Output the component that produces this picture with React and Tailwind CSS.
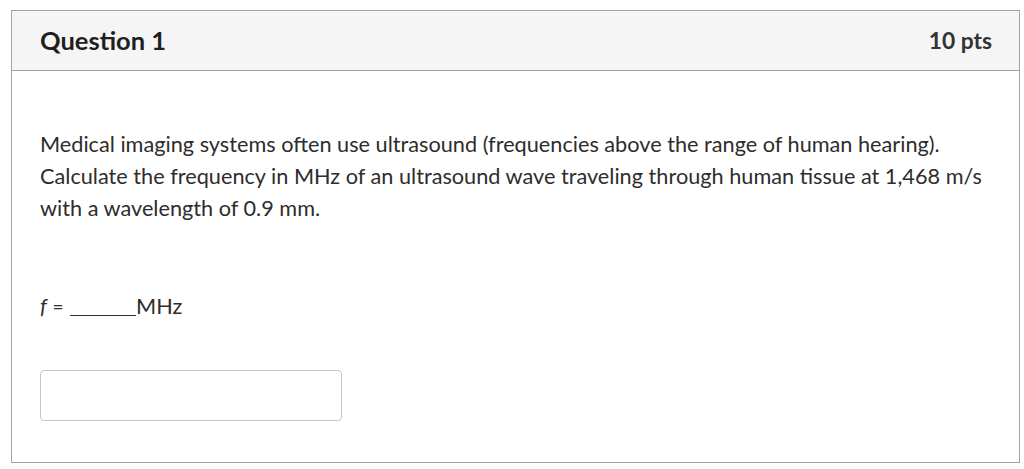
import React from 'react';

const App = () => {
    return (
        <div className="w-[1024px] h-[469px] bg-white font-['Lato','Liberation_Sans',sans-serif] text-[#2d2d2d] pt-[10px] pl-[11px]">
            <div className="w-[1009px] h-[453px] border border-[#a3a3a3] flex flex-col">
                {/* Header */}
                <div className="h-[60px] shrink-0 bg-[#f5f5f5] border-b border-[#a3a3a3] flex items-center justify-between pl-[28px] pr-[27px]">
                    <h2 className="text-[25.5px] font-bold text-[#1f1f1f] leading-none">Question 1</h2>
                    <span className="text-[22.8px] font-bold text-[#333] leading-none">10 pts</span>
                </div>

                {/* Body */}
                <div className="flex-1 pl-[28px] pr-[28px] pt-[57px]">
                    <p className="text-[21.7px] leading-[32px] text-[#2d2d2d]">
                        Medical imaging systems often use ultrasound (frequencies above the range of human hearing). Calculate the frequency in MHz of an ultrasound wave traveling through human tissue at 1,468 m/s with a wavelength of 0.9 mm.
                    </p>
                    <p className="mt-[66px] text-[21.7px] leading-[32px]">
                        <span className="italic">f</span> <span className="text-[19px]">=</span>{' '}
                        <span className="inline-block ml-[1px] w-[66px] border-b-[1.5px] border-[#2d2d2d] h-[20px] align-baseline -mb-[2px]"></span>MHz
                    </p>
                    <input
                        type="text"
                        className="mt-[47px] block w-[302px] h-[51px] border border-[#c7c7c7] rounded-[4px] bg-white outline-none"
                    />
                </div>
            </div>
        </div>
    );
};

export default App;
